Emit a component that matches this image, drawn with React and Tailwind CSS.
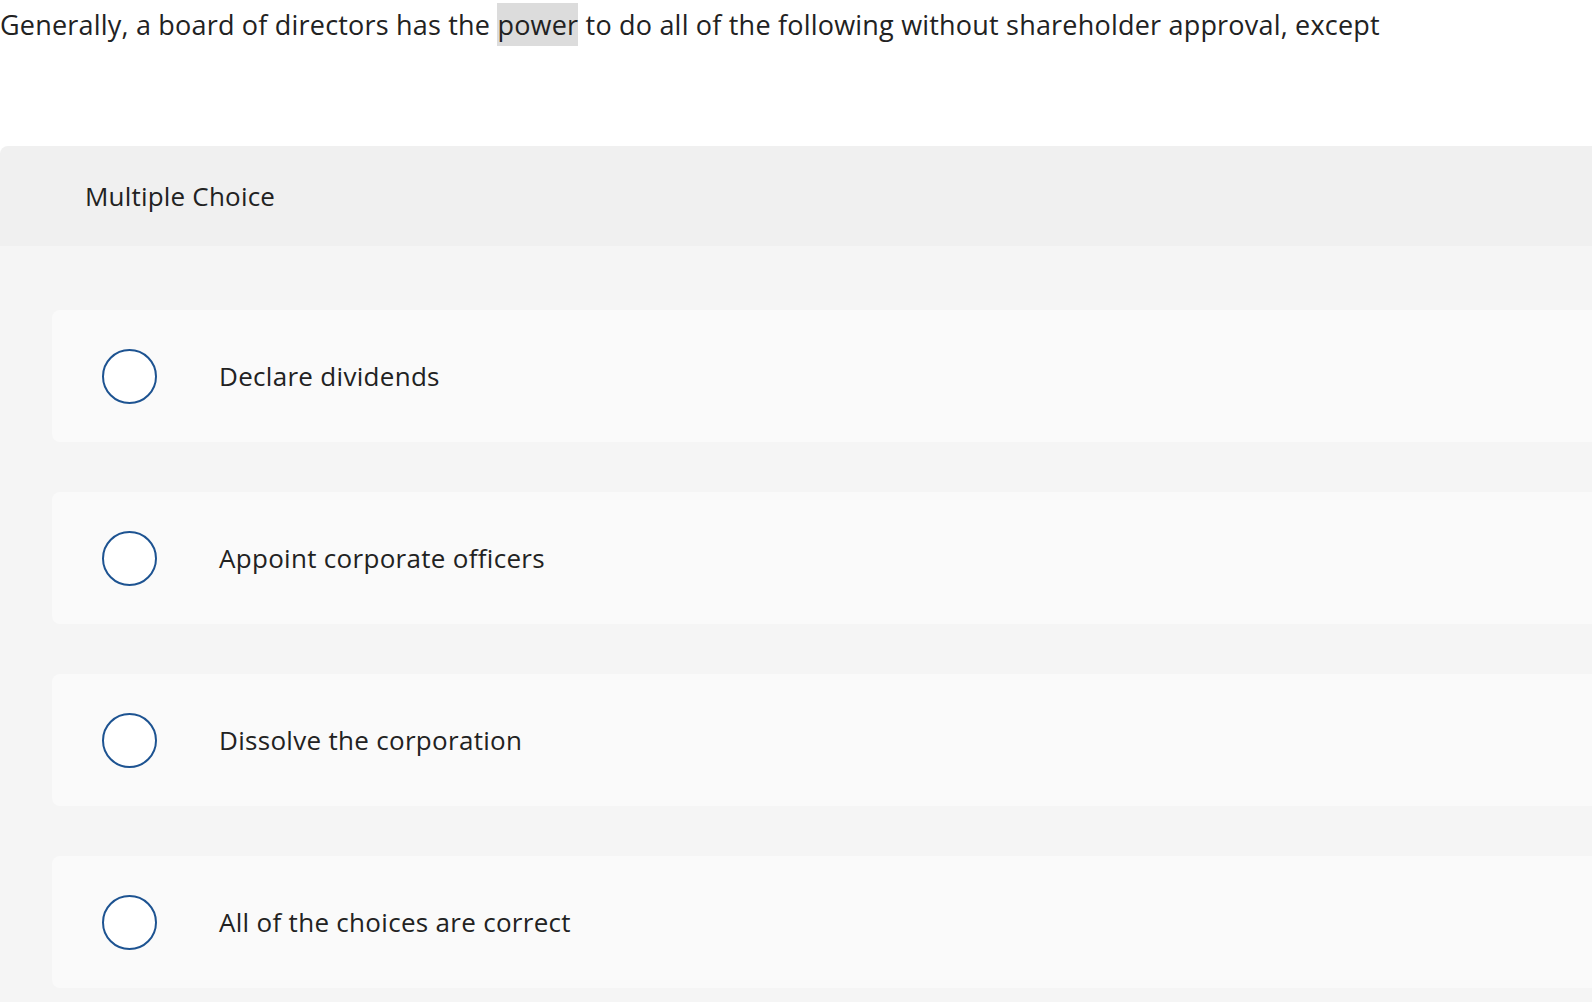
const choices = [
  "Declare dividends",
  "Appoint corporate officers",
  "Dissolve the corporation",
  "All of the choices are correct",
];

function Choice({ label }) {
  return (
    <label className="flex h-[132px] cursor-pointer items-center rounded-l-lg bg-[#fafafa] pl-[50px]">
      <span className="h-[55px] w-[55px] shrink-0 rounded-full border-2 border-[#1d5391] bg-white" />
      <span className="ml-[62px] text-[26px] tracking-[0.3px] text-[#222]">{label}</span>
    </label>
  );
}

export default function App() {
  return (
    <div className="min-h-screen overflow-hidden bg-white font-['Open_Sans',sans-serif] text-[#222]">
      <p className="pt-[4px] text-[27px] leading-[42px] tracking-[0.2px]">
        Generally, a board of directors has the{" "}
        <span className="bg-[#dcdcdc] py-[3px]">power</span> to do all of the
        following without shareholder approval, except
      </p>

      <section className="mt-[100px] overflow-hidden rounded-tl-lg">
        <div className="flex h-[100px] items-center bg-[#f0f0f0] pl-[85px]">
          <h2 className="text-[26px] tracking-[0.2px]">Multiple Choice</h2>
        </div>
        <div className="flex flex-col gap-[50px] bg-[#f5f5f5] pb-[40px] pl-[52px] pt-[64px]">
          {choices.map((c) => (
            <Choice key={c} label={c} />
          ))}
        </div>
      </section>
    </div>
  );
}
